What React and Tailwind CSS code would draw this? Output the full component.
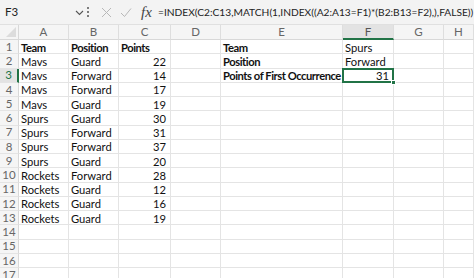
import React from "react";

const cols = ["A", "B", "C", "D", "E", "F", "G", "H"];
const data = [
  ["Team", "Position", "Points", "", "Team", "Spurs"],
  ["Mavs", "Guard", "22", "", "Position", "Forward"],
  ["Mavs", "Forward", "14", "", "Points of First Occurrence", "31"],
  ["Mavs", "Forward", "17"],
  ["Mavs", "Guard", "19"],
  ["Spurs", "Guard", "30"],
  ["Spurs", "Forward", "31"],
  ["Spurs", "Forward", "37"],
  ["Spurs", "Guard", "20"],
  ["Rockets", "Forward", "28"],
  ["Rockets", "Guard", "12"],
  ["Rockets", "Guard", "16"],
  ["Rockets", "Guard", "19"],
  [],
  [],
  [],
  [],
];

const gridCols = "grid grid-cols-[19px_50px_50px_52px_50px_122px_51px_50px_1fr]";

function Cell({ r, c, v }) {
  const bold = (r === 0 && c < 3) || (c === 4 && r < 3);
  const right = (c === 2 && r > 0) || (c === 5 && r === 2);
  const selected = r === 2 && c === 5;
  return (
    <div className="relative border-r border-b border-[#e4e4e4] h-full overflow-visible">
      <div
        className={
          "absolute inset-0 flex items-center whitespace-nowrap px-[2px] pt-[1px] " +
          (right ? "justify-end pr-[4px] " : "") +
          (bold ? "font-bold tracking-[-0.45px] " : "")
        }
      >
        {v}
      </div>
      {selected && (
        <div className="absolute left-[-1px] top-[-1px] right-[-1px] bottom-[-1px] border-2 border-[#217346] z-10">
          <div className="absolute right-[-4px] bottom-[-4px] w-[5px] h-[5px] bg-[#217346] border border-white" />
        </div>
      )}
    </div>
  );
}

export default function App() {
  return (
    <div className="w-[474px] h-[278px] overflow-hidden bg-white text-[#111] text-[11.2px] leading-none" style={{ fontFamily: 'Lato, "Noto Sans", sans-serif' }}>
      {/* formula bar */}
      <div className="h-[25px] bg-[#f3f3f3] flex items-center border-b border-[#e0e0e0]">
        <div className="w-[84px] shrink-0 h-full flex items-center pl-[5px] text-[11.5px] text-[#222]">
          <span className="flex-1">F3</span>
          <svg width="9" height="6" viewBox="0 0 9 6" className="mt-[1px]">
            <path d="M1 1 L4.5 4.5 L8 1" fill="none" stroke="#555" strokeWidth="1.1" />
          </svg>
        </div>
        <div className="w-[8px] shrink-0 flex flex-col items-center gap-[2px]">
          <span className="w-[2px] h-[2px] bg-[#555] rounded-full" />
          <span className="w-[2px] h-[2px] bg-[#555] rounded-full" />
          <span className="w-[2px] h-[2px] bg-[#555] rounded-full" />
        </div>
        <div className="flex items-center h-full shrink-0 ml-[5px] w-[61px] gap-[8px] pl-[4px]">
          <svg width="11" height="11" viewBox="0 0 11 11">
            <path d="M1 1 L10 10 M10 1 L1 10" stroke="#b8b8b8" strokeWidth="1" fill="none" />
          </svg>
          <svg width="12" height="11" viewBox="0 0 12 11">
            <path d="M1 6 L4.5 9.5 L11 1.5" stroke="#b8b8b8" strokeWidth="1" fill="none" />
          </svg>
          <span className="text-[15px] italic text-[#444] ml-[1px]" style={{ fontFamily: '"Liberation Serif", serif' }}>fx</span>
        </div>
        <div className="flex-1 min-w-0 h-full flex items-center pl-[0px] text-[10.2px] text-[#222] whitespace-nowrap">
          =INDEX(C2:C13,MATCH(1,INDEX((A2:A13=F1)*(B2:B13=F2),),FALSE))
        </div>
      </div>
      {/* column headers */}
      <div className={gridCols + " h-[15px] bg-[#f5f5f5] text-[#666] text-[11.5px]"}>
        <div className="border-r border-b border-[#d8d8d8] relative">
          <svg width="10" height="10" viewBox="0 0 10 10" className="absolute right-[2px] bottom-[2px]">
            <path d="M10 0 L10 10 L0 10 Z" fill="#dcdcdc" />
          </svg>
        </div>
        {cols.map((c) => (
          <div
            key={c}
            className={
              "flex items-center justify-center border-r border-[#dedede] " +
              (c === "F" ? "bg-[#e3e3e3] border-b-2 border-b-[#217346] text-[#555]" : "border-b border-b-[#d8d8d8]")
            }
          >
            {c}
          </div>
        ))}
      </div>
      {/* rows */}
      {data.map((row, r) => (
        <div key={r} className={gridCols + " h-[14.25px]"}>
          <div
            className={
              "flex items-center justify-center text-[11.5px] border-b border-[#e4e4e4] " +
              (r === 2 ? "bg-[#e3e3e3] text-[#217346] border-r-2 border-r-[#217346]" : "bg-[#f5f5f5] text-[#666] border-r border-r-[#d8d8d8]")
            }
          >
            {r + 1}
          </div>
          {cols.map((c, ci) => (
            <Cell key={c} r={r} c={ci} v={row[ci] || ""} />
          ))}
        </div>
      ))}
    </div>
  );
}
